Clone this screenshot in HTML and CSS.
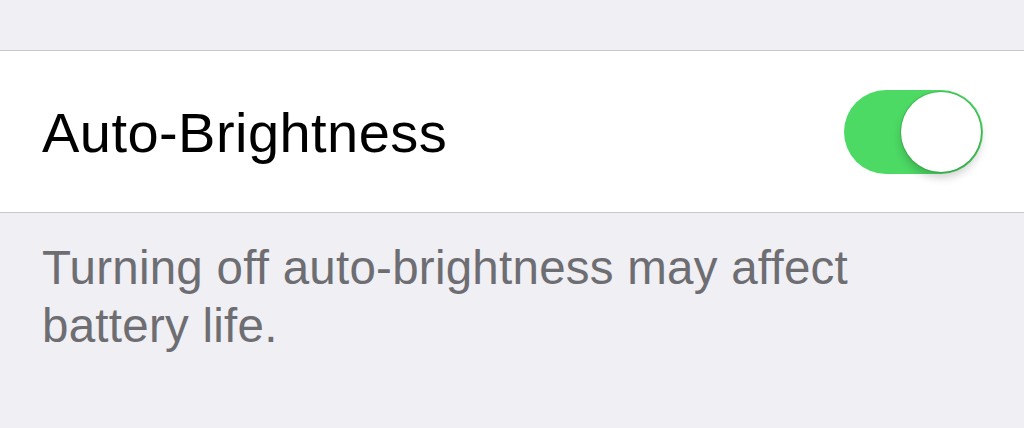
FILE: index.html
```html
<!DOCTYPE html>
<html lang="en">
<head>
    <meta charset="UTF-8">
    <meta name="viewport" content="width=device-width, initial-scale=1.0">
    <title>Display &amp; Brightness</title>
    <link rel="stylesheet" href="styles.css">
</head>
<body>
    <div class="group">
        <div class="row">
            <span class="label">Auto-Brightness</span>
            <label class="switch">
                <input type="checkbox" checked>
                <span class="track"><span class="knob"></span></span>
            </label>
        </div>
    </div>
    <p class="footer">Turning off auto-brightness may affect<br>battery life.</p>
</body>
</html>
```

FILE: styles.css
```css
body {
    margin: 0;
    padding-top: 50px;
    background-color: #efeff4;
    font-family: "Liberation Sans", Arial, sans-serif;
    height: 100vh;
    box-sizing: border-box;
    overflow: hidden;
}

.group {
    background: #fff;
    border-top: 1.5px solid #c8c7cc;
    border-bottom: 1.5px solid #c8c7cc;
}

.row {
    height: 161px;
    display: flex;
    align-items: center;
    justify-content: space-between;
    padding: 0 41px 0 42px;
}

.label {
    font-size: 56px;
    letter-spacing: 0.45px;
    color: #000;
    margin-top: 2px;
}

.switch input {
    display: none;
}

.track {
    display: flex;
    align-items: center;
    justify-content: flex-end;
    width: 139px;
    height: 84px;
    padding: 0 2px;
    box-sizing: border-box;
    border-radius: 42px;
    background-color: #4cd964;
}

.knob {
    width: 80px;
    height: 80px;
    border-radius: 50%;
    background: #fff;
    box-shadow: 0 0 0 1px rgba(40, 140, 50, 0.35), 0 6px 8px rgba(0, 0, 0, 0.18);
}

.footer {
    margin: 26px 0 0 42px;
    font-size: 47.5px;
    letter-spacing: 0.25px;
    line-height: 58px;
    color: #6d6d72;
}
```
